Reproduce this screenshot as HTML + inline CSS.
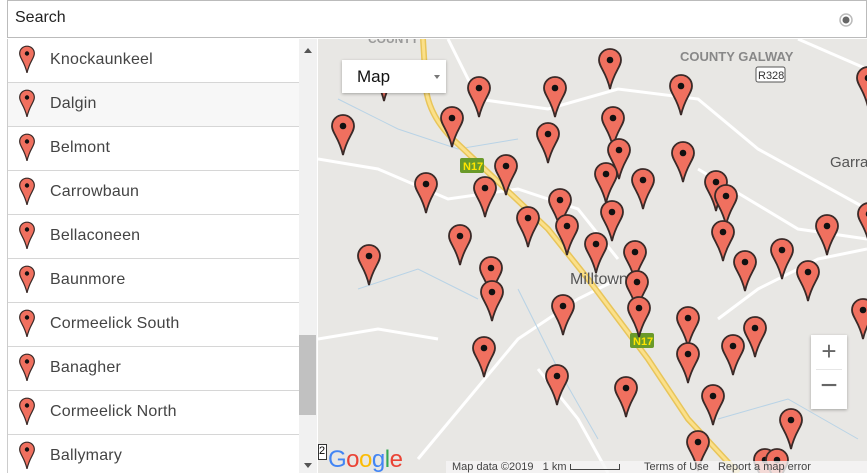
<!DOCTYPE html>
<html><head><meta charset="utf-8"><style>
*{box-sizing:border-box;margin:0;padding:0}
body{width:867px;height:473px;overflow:hidden;background:#fff;font-family:"Liberation Sans",sans-serif;position:relative}
#search{position:absolute;left:7px;top:0;width:860px;height:38px;border:1px solid #bbb;background:#fff;font-size:16px;color:#222;padding:8px 0 0 7px}
#loc{position:absolute;right:12px;top:11px;width:16px;height:16px}
#list{position:absolute;left:7px;top:39px;width:292px;height:434px;border-left:1px solid #ccc;overflow:hidden;background:#fff}
.row{height:44px;border-bottom:1px solid #d6d6d6;position:relative;font-size:16px;color:#444;padding:12px 0 0 42px;letter-spacing:0.2px}
.row.alt{background:#f7f7f7}
.row svg{position:absolute;left:11px;top:6px}
#sb{position:absolute;left:299px;top:39px;width:18px;height:434px;background:#f1f1f1}
#thumb{position:absolute;left:0;top:296px;width:17px;height:80px;background:#c1c1c1}
#map{position:absolute;left:318px;top:39px;width:549px;height:434px;background:#e8e7e4;overflow:hidden}
.pin{position:absolute;width:24px;height:42px}
#mapsel{position:absolute;left:24px;top:21px;width:104px;height:33px;background:#fff;box-shadow:0 1px 3px rgba(0,0,0,.3);font-size:17px;color:#111;padding:7px 0 0 15px}
#zoom{position:absolute;left:493px;top:296px;width:36px;height:74px;background:#fff;box-shadow:0 1px 3px rgba(0,0,0,.3)}
</style></head><body>
<div id="search">Search<svg id="loc" viewBox="0 0 16 16"><circle cx="8" cy="8" r="6" fill="none" stroke="#bbb" stroke-width="1.5"/><circle cx="8" cy="8" r="3.5" fill="#666"/></svg></div>
<div id="list"></div>
<div id="sb"><div style="position:absolute;left:5px;top:9px;border:4px solid transparent;border-bottom:5px solid #555;border-top:0"></div><div id="thumb"></div><div style="position:absolute;left:5px;top:424px;border:4px solid transparent;border-top:5px solid #555;border-bottom:0"></div></div>
<div id="map">
<svg width="549" height="434" style="position:absolute;left:0;top:0">
<g fill="none" stroke="#fff" stroke-width="3">
<path d="M0 120 L60 130 L130 160 L200 150 L260 170 L300 220"/>
<path d="M130 0 L160 60 L230 70 L300 50 L380 60 L440 110 L549 170"/>
<path d="M480 0 L549 30"/><path d="M380 130 L430 160 L480 190 L549 200"/>
<path d="M100 420 L200 300 L260 260 L300 240"/>
<path d="M220 330 L260 380 L290 434"/>
<path d="M400 280 L440 250 L500 220 L549 210"/>
<path d="M0 300 L60 290 L120 300"/>
</g>
<g fill="none" stroke="#b8d3e6" stroke-width="1">
<path d="M20 60 L80 90 L140 110 L200 100"/><path d="M200 250 L240 330 L280 400"/><path d="M400 380 L470 360 L540 400"/><path d="M40 250 L100 230 L160 260"/>
</g>
<path d="M105 0 L108 50 Q112 80 140 105 L230 190 L270 240 L330 320 L370 380 L420 434" fill="none" stroke="#e8c55a" stroke-width="6"/>
<path d="M105 0 L108 50 Q112 80 140 105 L230 190 L270 240 L330 320 L370 380 L420 434" fill="none" stroke="#fbe08a" stroke-width="3"/>
<rect x="142" y="119" width="24" height="15" rx="2" fill="#6a9a2a"/><text x="145" y="131" font-size="11" font-weight="bold" fill="#ffe500" font-family="Liberation Sans">N17</text>
<rect x="312" y="294" width="24" height="15" rx="2" fill="#6a9a2a"/><text x="315" y="306" font-size="11" font-weight="bold" fill="#ffe500" font-family="Liberation Sans">N17</text>
<text x="362" y="22" font-size="13" font-weight="bold" fill="#888" font-family="Liberation Sans">COUNTY GALWAY</text>
<rect x="438" y="28" width="29" height="15" rx="2" fill="#fff" stroke="#555"/><text x="440" y="40" font-size="11" fill="#333" font-family="Liberation Sans">R328</text>
<text x="252" y="245" font-size="16" fill="#555" font-family="Liberation Sans">Milltown</text>
<text x="512" y="128" font-size="15" fill="#555" font-family="Liberation Sans">Garra</text>
<text x="50" y="4" font-size="12" font-weight="bold" fill="#999" font-family="Liberation Sans">COUNTY</text>
</svg>
<div id="pins"></div>
<div id="mapsel">Map<span style="position:absolute;right:6px;top:15px;border:3px solid transparent;border-top:4px solid #777"></span></div>
<div id="zoom"><div style="font-size:26px;color:#666;text-align:center;line-height:32px">+</div><div style="border-top:1px solid #e6e6e6;margin:2px 5px 0;font-size:30px;color:#666;text-align:center;line-height:32px">−</div></div>
<div style="position:absolute;left:10px;top:407px;font-size:24px;font-family:'Liberation Sans';letter-spacing:-0.5px"><span style="color:#4285f4">G</span><span style="color:#ea4335">o</span><span style="color:#fbbc05">o</span><span style="color:#4285f4">g</span><span style="color:#34a853">l</span><span style="color:#ea4335">e</span></div>
<div style="position:absolute;left:0;top:405px;width:9px;height:16px;border:1px solid #333;font-size:11px;background:#fff">2</div>
<div style="position:absolute;left:128px;top:422px;width:421px;height:14px;background:rgba(245,245,245,.8);font-size:11px;color:#444;white-space:nowrap;padding-left:6px">Map data ©2019 &nbsp;&nbsp;1 km <span style="display:inline-block;width:50px;height:6px;border:1px solid #444;border-top:0"></span> &nbsp;&nbsp;&nbsp;&nbsp;&nbsp;&nbsp;&nbsp;Terms of Use &nbsp;&nbsp;Report a map error</div>
</div>
<script>
var pinSvg=function(w,h){return '<svg width="'+w+'" height="'+h+'" viewBox="0 0 24 42"><path d="M12 1C5.7 1 1 5.9 1 12c0 7 7 11.5 11 29 4-17.5 11-22 11-29C23 5.9 18.3 1 12 1z" fill="#f0705f" stroke="#3a2a28" stroke-width="1.8"/><circle cx="12" cy="12" r="3.3" fill="#111"/></svg>'};
var names=["Knockaunkeel","Dalgin","Belmont","Carrowbaun","Bellaconeen","Baunmore","Cormeelick South","Banagher","Cormeelick North","Ballymary"];
var h='';names.forEach(function(n,i){h+='<div class="row'+(i==1?' alt':'')+'">'+pinSvg(16,29)+n+'</div>'});
document.getElementById('list').innerHTML=h;
var P=[[384,72],[610,60],[555,88],[479,88],[681,86],[452,118],[343,126],[548,134],[613,118],[619,150],[683,153],[506,166],[606,174],[643,180],[716,182],[726,196],[426,184],[485,188],[560,200],[528,218],[567,226],[612,212],[723,232],[827,226],[596,244],[635,252],[460,236],[782,250],[369,256],[745,262],[808,272],[491,268],[637,282],[492,292],[639,308],[563,306],[863,310],[688,318],[755,328],[733,346],[484,348],[688,354],[557,376],[626,388],[713,396],[791,420],[698,442],[765,460],[777,460],[868,78],[869,214]];
var s='';P.forEach(function(p){s+='<div class="pin" style="left:'+(p[0]-318-12)+'px;top:'+(p[1]-39-12)+'px">'+pinSvg(24,42)+'</div>'});
document.getElementById('pins').innerHTML=s;
</script>
</body></html>
